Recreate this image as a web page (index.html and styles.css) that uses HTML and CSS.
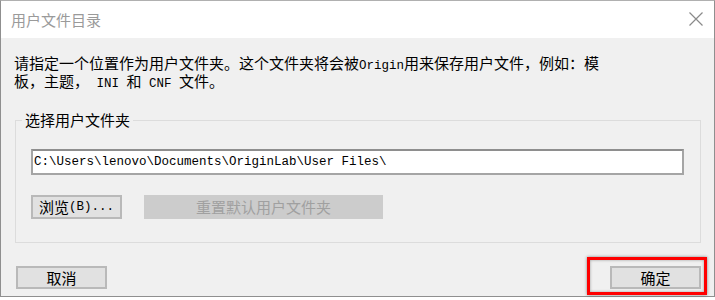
FILE: index.html
```html
<!DOCTYPE html>
<html lang="zh">
<head>
<meta charset="utf-8">
<title>用户文件目录</title>
<link rel="stylesheet" href="styles.css">
</head>
<body>
<div class="window">
  <div class="titlebar">
    <span class="title">用户文件目录</span>
    <svg class="close" width="14" height="14" viewBox="0 0 14 14" aria-hidden="true">
      <path d="M0.5 0.5 L13.5 13.5 M13.5 0.5 L0.5 13.5" stroke="#8a8a8a" stroke-width="1.2" fill="none"/>
    </svg>
  </div>
  <div class="content">
    <p class="message">请指定一个位置作为用户文件夹。这个文件夹将会被<span class="mono">Origin</span>用来保存用户文件，例如：模<br>板，主题，<span class="mono"> INI </span>和<span class="mono"> CNF </span>文件。</p>
    <fieldset class="group">
      <legend class="legend">选择用户文件夹</legend>
      <div class="path">C:\Users\lenovo\Documents\OriginLab\User Files\</div>
      <div class="row">
        <button class="btn browse">浏览<span class="mono">(B)...</span></button>
        <button class="btn disabled">重置默认用户文件夹</button>
      </div>
    </fieldset>
    <div class="footer">
      <button class="btn action">取消</button>
      <button class="btn action">确定</button>
    </div>
  </div>
  <div class="highlight"></div>
</div>
</body>
</html>
```
FILE: styles.css
```css
html, body {
  margin: 0;
  padding: 0;
  background: #ffffff;
}
body {
  width: 715px;
  height: 300px;
  overflow: hidden;
  font-family: "Noto Sans CJK SC", "Liberation Sans", sans-serif;
  font-size: 15px;
  color: #000;
}
.window {
  position: relative;
  box-sizing: border-box;
  width: 715px;
  height: 297px;
  border: 1px solid #8f8f8f;
  border-top-color: #b0b0b0;
  display: flex;
  flex-direction: column;
  background: #f0f0f0;
}
.titlebar {
  height: 37px;
  flex: none;
  background: #ffffff;
  display: flex;
  align-items: center;
  justify-content: space-between;
  padding: 0 11px 0 10px;
}
.title {
  color: #9a9a9a;
  font-size: 15px;
  line-height: 16px;
}
.close {
  display: block;
  margin-top: -1px;
}
.content {
  flex: 1;
  display: flex;
  flex-direction: column;
  padding: 17px 13px 7px 13px;
}
.message {
  margin: 0;
  line-height: 16px;
  font-size: 15px;
}
.mono {
  font-family: "Liberation Mono", monospace;
  font-size: 12.5px;
  line-height: 13px;
}
.group {
  margin: 21px 0 0 1px;
  padding: 0 16px 23px 15px;
  border: 1px solid #dcdcdc;
  min-width: 0;
}
.legend {
  margin-left: -9px;
  padding: 0 3px;
  line-height: 16px;
  font-size: 15px;
}
.path {
  margin-top: 21px;
  box-sizing: border-box;
  height: 26px;
  background: #ffffff;
  border: 2px solid #a5a5a5;
  border-top-color: #8e8e8e;
  padding: 0 0 0 1px;
  font-family: "Liberation Mono", monospace;
  font-size: 12.5px;
  line-height: 22px;
  white-space: nowrap;
}
.row {
  display: flex;
  gap: 22px;
  margin-top: 20px;
}
.btn {
  box-sizing: border-box;
  height: 24px;
  margin: 0;
  padding: 0;
  background: #e1e1e1;
  border: 2px solid #b9b9b9;
  font-family: "Noto Sans CJK SC", "Liberation Sans", sans-serif;
  font-size: 15px;
  line-height: 18px;
  color: #000;
  display: flex;
  align-items: center;
  justify-content: center;
}
.browse {
  width: 91px;
}
.disabled {
  width: 239px;
  background: #cccccc;
  border-color: #cccccc;
  color: #a0a0a0;
}
.footer {
  margin-top: auto;
  display: flex;
  justify-content: space-between;
  padding-left: 2px;
}
.action {
  width: 91px;
  height: 23px;
}
.highlight {
  position: absolute;
  left: 586px;
  top: 256px;
  width: 120px;
  height: 38px;
  box-sizing: border-box;
  border: 3px solid #ff0000;
  box-shadow: 0 0 3px rgba(0, 0, 0, 0.45), inset 0 0 3px rgba(0, 0, 0, 0.35);
}
```
